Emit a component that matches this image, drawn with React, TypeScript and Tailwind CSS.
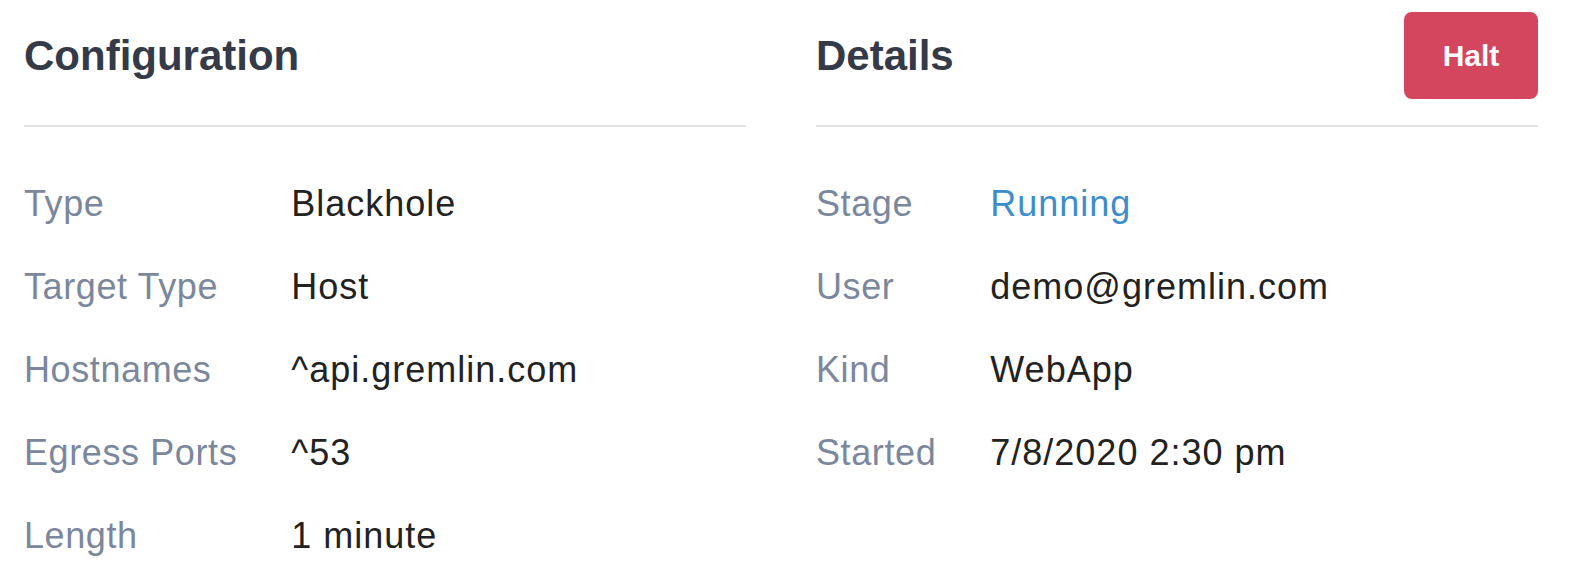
import React from "react";

const Row = ({ label, value, blue }: { label: string; value: string; blue?: boolean }) => (
  <>
    <div className="h-[83px] flex items-center text-[36px] tracking-[0.6px] text-[#7b879c] whitespace-nowrap">{label}</div>
    <div className={`h-[83px] flex items-center text-[36px] tracking-[1px] whitespace-nowrap ${blue ? "text-[#3d8dcc]" : "text-[#222222]"}`}>{value}</div>
  </>
);

export default function App() {
  return (
    <div className="w-[1580px] h-[586px] bg-white pl-[24px] flex gap-[70px] font-['Liberation_Sans',Arial,sans-serif]">
      <div className="w-[722px]">
        <div className="h-[127px] border-b-2 border-[#e3e3e3] flex items-center pb-[14px]">
          <h1 className="text-[42px] font-bold text-[#353a48] leading-none">Configuration</h1>
        </div>
        <div className="grid grid-cols-[auto_1fr] gap-x-[54px] pt-[35px]">
          <Row label="Type" value="Blackhole" />
          <Row label="Target Type" value="Host" />
          <Row label="Hostnames" value="^api.gremlin.com" />
          <Row label="Egress Ports" value="^53" />
          <Row label="Length" value="1 minute" />
        </div>
      </div>
      <div className="w-[722px]">
        <div className="h-[127px] border-b-2 border-[#e3e3e3] flex items-center justify-between pb-[14px]">
          <h1 className="text-[42px] font-bold text-[#353a48] leading-none">Details</h1>
          <button className="w-[134px] h-[87px] rounded-[8px] bg-[#d4465d] text-white text-[30px] font-bold">Halt</button>
        </div>
        <div className="grid grid-cols-[auto_1fr] gap-x-[54px] pt-[35px]">
          <Row label="Stage" value="Running" blue />
          <Row label="User" value="demo@gremlin.com" />
          <Row label="Kind" value="WebApp" />
          <Row label="Started" value="7/8/2020 2:30 pm" />
        </div>
      </div>
    </div>
  );
}
